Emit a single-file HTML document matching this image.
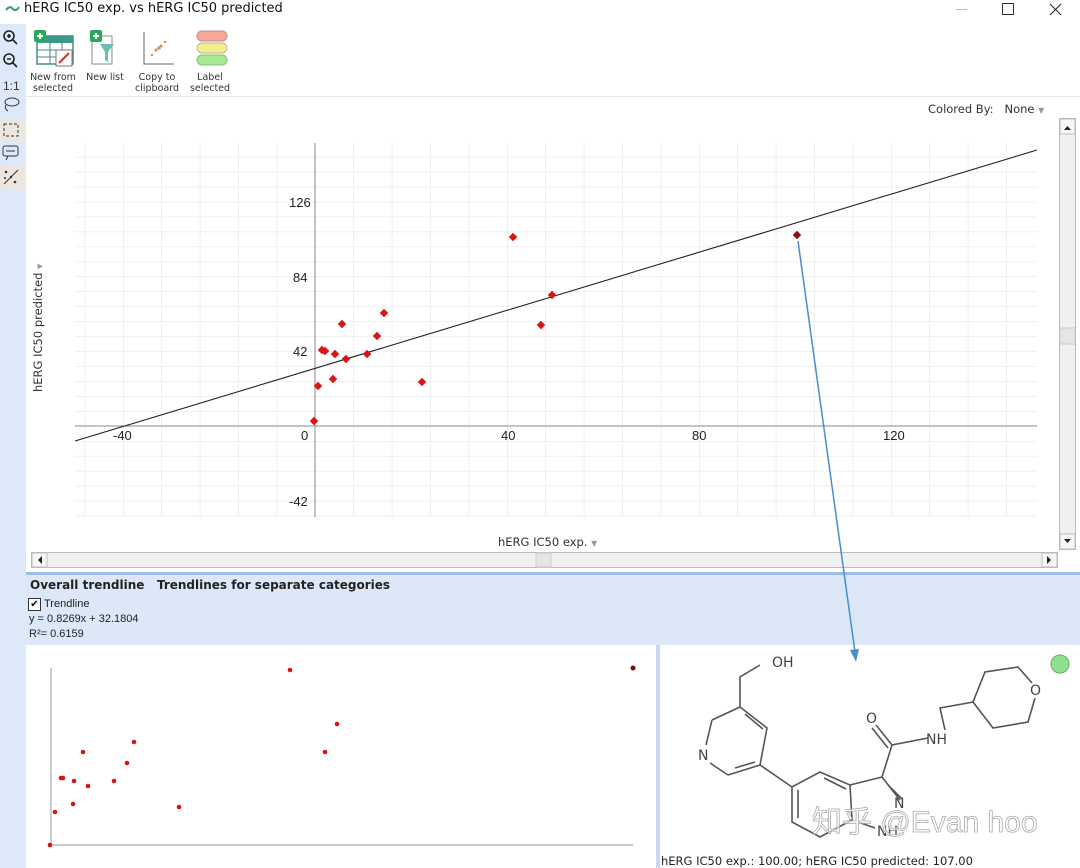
<!DOCTYPE html>
<html><head><meta charset="utf-8"><style>
html,body{margin:0;padding:0;width:1080px;height:868px;overflow:hidden;background:#fff;font-family:"DejaVu Sans","Liberation Sans",sans-serif;}
.a{position:absolute}
</style></head><body>
<div class="a" style="left:0;top:0;width:1080px;height:868px;">
<div class="a" style="left:0;top:0;width:1080px;height:22px;background:#fff;"></div>
<svg class="a" style="left:4px;top:3px" width="16" height="12"><path d="M2 7 Q6 2 9 6 Q12 9 15 4" stroke="#3a9a6a" stroke-width="2" fill="none"/></svg>
<div class="a" style="left:24px;top:1px;font-size:13px;color:#111;">hERG IC50 exp. vs hERG IC50 predicted</div>
<div class="a" style="left:956px;top:9px;width:11px;height:1px;background:#bbb"></div>
<div class="a" style="left:1002px;top:3px;width:10px;height:10px;border:1px solid #333"></div>
<svg class="a" style="left:1049px;top:3px" width="13" height="13"><path d="M1 1L12 12M12 1L1 12" stroke="#333" stroke-width="1.2"/></svg>
<div class="a" style="left:0;top:24px;width:26px;height:844px;background:#dde9f8;"></div>
<div class="a" style="left:0;top:120px;width:26px;height:22px;background:#ebe6df;"></div>
<div class="a" style="left:0;top:166px;width:26px;height:24px;background:#ebe6df;"></div>
<svg class="a" style="left:0;top:26px" width="26" height="170">
<circle cx="9" cy="10" r="5" stroke="#222" stroke-width="1.6" fill="none"/><path d="M12 13l5 5M7 10h4M9 8v4" stroke="#222" stroke-width="1.6"/>
<circle cx="9" cy="33" r="5" stroke="#222" stroke-width="1.6" fill="none"/><path d="M12 36l5 5M7 33h4" stroke="#222" stroke-width="1.6"/>
<text x="3" y="64" font-size="12" fill="#333" font-family="Liberation Sans">1:1</text>
<ellipse cx="12" cy="76" rx="7" ry="4" stroke="#333" fill="none"/><path d="M6 79 q-2 4 2 6" stroke="#333" fill="none"/>
<rect x="4" y="98" width="14" height="12" stroke="#333" stroke-dasharray="3 2" fill="none"/>
<rect x="3" y="120" width="15" height="10" rx="2" stroke="#333" fill="none"/><path d="M6 125h9M8 130l-2 4" stroke="#333"/>
<path d="M4 158 L18 144" stroke="#333"/><circle cx="6" cy="146" r="1.3" fill="#333"/><circle cx="15" cy="156" r="1.3" fill="#333"/><circle cx="11" cy="151" r="1.2" fill="#333"/><circle cx="5" cy="152" r="1" fill="#333"/>
</svg>
<div class="a" style="left:26px;top:96px;width:1054px;height:1px;background:#e6e6e6"></div>
<svg class="a" style="left:34px;top:30px" width="210" height="40">
<rect x="3" y="6" width="36" height="28" fill="#fff" stroke="#4a8a8a" stroke-width="1.5"/><rect x="3" y="6" width="36" height="7" fill="#3a9a8a"/><path d="M3 20h36M3 27h36M16 6v28M28 6v28" stroke="#4a8a8a"/>
<rect x="0" y="0" width="12" height="12" rx="2" fill="#2aa85a"/><path d="M6 3v6M3 6h6" stroke="#fff" stroke-width="2"/>
<rect x="22" y="20" width="16" height="16" fill="#fff" stroke="#777"/><path d="M25 33l10-10" stroke="#c33" stroke-width="2"/>
<rect x="58" y="6" width="20" height="28" fill="#fff" stroke="#888"/><path d="M66 14l14 0-6 8v10l-3-2v-8z" fill="#6ac0b0"/>
<rect x="56" y="0" width="12" height="12" rx="2" fill="#2aa85a"/><path d="M62 3v6M59 6h6" stroke="#fff" stroke-width="2"/>
<path d="M110 2v32h30" stroke="#666" fill="none"/><circle cx="122" cy="20" r="1.5" fill="#d84"/><circle cx="127" cy="16" r="1.5" fill="#d84"/><circle cx="131" cy="12" r="1.2" fill="#d84"/><circle cx="118" cy="25" r="1.2" fill="#d84"/><circle cx="125" cy="18" r="1.8" fill="#c96"/>
<rect x="163" y="1" width="30" height="10" rx="5" fill="#f4a898" stroke="#c88"/><rect x="163" y="13" width="30" height="10" rx="5" fill="#f4ee90" stroke="#bb8"/><rect x="163" y="25" width="30" height="10" rx="5" fill="#a8e890" stroke="#8b8"/>
</svg>
<div class="a" style="left:28px;top:72px;width:50px;text-align:center;font-size:9.5px;line-height:11px;color:#333">New from selected</div>
<div class="a" style="left:84px;top:72px;width:42px;text-align:center;font-size:9.5px;line-height:11px;color:#333">New list</div>
<div class="a" style="left:134px;top:72px;width:46px;text-align:center;font-size:9.5px;line-height:11px;color:#333">Copy to clipboard</div>
<div class="a" style="left:188px;top:72px;width:44px;text-align:center;font-size:9.5px;line-height:11px;color:#333">Label selected</div>
<div class="a" style="left:928px;top:102px;font-size:11.5px;color:#333">Colored By:&nbsp;&nbsp;&nbsp;None <span style="color:#999;font-size:8px">▼</span></div>
<svg class="a" style="left:0;top:0" width="1080" height="570">
<defs><pattern id="g" patternUnits="userSpaceOnUse" x="315" y="426" width="38.4" height="14.95"><path d="M0 0V14.95M0 0H38.4" stroke="#e2e2e2" stroke-width="1"/></pattern>
<clipPath id="c"><rect x="75" y="143" width="962" height="374"/></clipPath></defs>
<rect x="75" y="143" width="962" height="374" fill="url(#g)" clip-path="url(#c)"/>
<path d="M75 426H1037" stroke="#888"/><path d="M315 143V517" stroke="#888"/>
<path d="M75 441L1037 150" stroke="#222" stroke-width="1.1"/>
<g font-family="Liberation Sans" font-size="13" fill="#222">
<text x="289" y="207">126</text><text x="293" y="282">84</text><text x="293" y="356">42</text><text x="289" y="506">-42</text>
<text x="113" y="440">-40</text><text x="301" y="440">0</text><text x="501" y="440">40</text><text x="692" y="440">80</text><text x="883" y="440">120</text>
</g>
<text transform="translate(42,392) rotate(-90)" font-size="11.5" fill="#333">hERG IC50 predicted <tspan fill="#999" font-size="7">▼</tspan></text>
<text x="498" y="546" font-size="11.5" fill="#333">hERG IC50 exp. <tspan fill="#999" font-size="8">▼</tspan></text>
<g fill="#d81414">
<rect x="311" y="418" width="6" height="6" transform="rotate(45 314 421)"/>
<rect x="315" y="383" width="6" height="6" transform="rotate(45 318 386)"/>
<rect x="319" y="347" width="6" height="6" transform="rotate(45 322 350)"/>
<rect x="322" y="348" width="6" height="6" transform="rotate(45 325 351)"/>
<rect x="332" y="351" width="6" height="6" transform="rotate(45 335 354)"/>
<rect x="339" y="321" width="6" height="6" transform="rotate(45 342 324)"/>
<rect x="343" y="356" width="6" height="6" transform="rotate(45 346 359)"/>
<rect x="330" y="376" width="6" height="6" transform="rotate(45 333 379)"/>
<rect x="364" y="351" width="6" height="6" transform="rotate(45 367 354)"/>
<rect x="374" y="333" width="6" height="6" transform="rotate(45 377 336)"/>
<rect x="381" y="310" width="6" height="6" transform="rotate(45 384 313)"/>
<rect x="419" y="379" width="6" height="6" transform="rotate(45 422 382)"/>
<rect x="510" y="234" width="6" height="6" transform="rotate(45 513 237)"/>
<rect x="538" y="322" width="6" height="6" transform="rotate(45 541 325)"/>
<rect x="549" y="292" width="6" height="6" transform="rotate(45 552 295)"/>
</g>
<rect x="794" y="232" width="6" height="6" fill="#8a1010" transform="rotate(45 797 235)"/>
<rect x="1059.5" y="118.5" width="16" height="431" fill="#f0f0f0" stroke="#bbb"/>
<rect x="1060" y="119" width="15" height="15" fill="#f7f7f7" stroke="#bbb"/><path d="M1064 130l3.5-4 3.5 4z" fill="#222"/>
<rect x="1060" y="534" width="15" height="15" fill="#f7f7f7" stroke="#bbb"/><path d="M1064 539l3.5 4 3.5-4z" fill="#222"/>
<rect x="1060" y="328" width="15" height="16" fill="#e6e6e6" stroke="#ccc"/>
<rect x="31.5" y="552.5" width="1026" height="15" fill="#f0f0f0" stroke="#bbb"/>
<rect x="32" y="553" width="15" height="14" fill="#f7f7f7" stroke="#bbb"/><path d="M42 556l-4 4 4 4z" fill="#222"/>
<rect x="1042" y="553" width="15" height="14" fill="#f7f7f7" stroke="#bbb"/><path d="M1047 556l4 4-4 4z" fill="#222"/>
<rect x="536" y="553" width="15" height="14" fill="#e6e6e6" stroke="#ccc"/>
</svg>
<div class="a" style="left:26px;top:572px;width:1054px;height:3px;background:#9cbde8"></div>
<div class="a" style="left:26px;top:575px;width:1054px;height:70px;background:#dce8f8"></div>
<div class="a" style="left:30px;top:578px;font-size:12px;font-weight:bold;color:#222">Overall trendline&nbsp;&nbsp;&nbsp;Trendlines for separate categories</div>
<div class="a" style="left:28px;top:598px;width:11px;height:11px;border:1px solid #333;background:#fff;font-size:10px;line-height:11px;text-align:center">✔</div>
<div class="a" style="left:44px;top:598px;font-family:'Liberation Sans',sans-serif;font-size:11px;color:#222">Trendline</div>
<div class="a" style="left:29px;top:613px;font-family:'Liberation Sans',sans-serif;font-size:11px;color:#222">y = 0.8269x + 32.1804</div>
<div class="a" style="left:29px;top:628px;font-family:'Liberation Sans',sans-serif;font-size:11px;color:#222">R²= 0.6159</div>
<div class="a" style="left:26px;top:645px;width:632px;height:223px;background:#fff"></div>
<div class="a" style="left:656px;top:645px;width:4px;height:223px;background:#c8d8ee"></div>
<svg class="a" style="left:0;top:640px" width="660" height="228">
<path d="M51 28V205H633" stroke="#999" fill="none"/>
<g fill="#d81414">
<circle cx="50" cy="205" r="2.3"/><circle cx="55" cy="172" r="2.3"/><circle cx="61" cy="138" r="2.3"/><circle cx="63" cy="138" r="2.3"/><circle cx="74" cy="141" r="2.3"/><circle cx="83" cy="112" r="2.3"/><circle cx="88" cy="146" r="2.3"/><circle cx="73" cy="164" r="2.3"/><circle cx="114" cy="141" r="2.3"/><circle cx="127" cy="123" r="2.3"/><circle cx="134" cy="102" r="2.3"/><circle cx="179" cy="167" r="2.3"/><circle cx="290" cy="30" r="2.3"/><circle cx="325" cy="112" r="2.3"/><circle cx="337" cy="84" r="2.3"/>
</g><circle cx="633" cy="28" r="2.5" fill="#7a1010"/>
</svg>
<svg class="a" style="left:660px;top:645px" width="420" height="223" font-family="DejaVu Sans" font-size="14" fill="#444">
<g transform="translate(-660,-645)" stroke="#555" stroke-width="1.6" fill="none">
<path d="M760 665L740 677L740 707L767 728L760 765L728 775M712 720L740 707M706 745L712 720M710 763L728 775"/>
<path d="M745 714L763 729M735 768L755 762"/>
<path d="M760 765L792 787L820 772L850 785L852 820L820 837L792 822L792 787"/>
<path d="M798 790V818M824 778L846 789"/>
<path d="M850 785L882 777L900 800M882 777L892 745L928 738M892 745L876 725M888 748L872 728M858 822L875 828"/>
<path d="M888 785L902 799" />
<path d="M945 730L940 708L973 702L985 672L1018 667L1032 683M1035 698L1028 722L993 728L973 702"/>
</g>
<text x="112" y="22">OH</text>
<text x="38" y="115">N</text>
<text x="206" y="78">O</text>
<text x="266" y="99">NH</text>
<text x="370" y="50">O</text>
<text x="234" y="163">N</text>
<text x="217" y="191">NH</text>
<circle cx="400" cy="19" r="9" fill="#8fe08f" stroke="#6a6" stroke-width="1"/>
<text x="152" y="187" font-family="'Liberation Sans','Noto Sans CJK SC',sans-serif" font-size="30" fill="rgba(255,255,255,0.7)" stroke="#aaa" stroke-width="0.8">知乎 @Evan hoo</text>
</svg>
<div class="a" style="left:661px;top:854px;font-size:11.5px;color:#222;white-space:nowrap">hERG IC50 exp.: 100.00; hERG IC50 predicted: 107.00</div>
<svg class="a" style="left:0;top:0" width="1080" height="868">
<path d="M798 241L855 652" stroke="#4a8cd0" stroke-width="1.5"/><path d="M850 650l6 12 3-13z" fill="#4a8cd0"/>
</svg>
</div>
</body></html>
